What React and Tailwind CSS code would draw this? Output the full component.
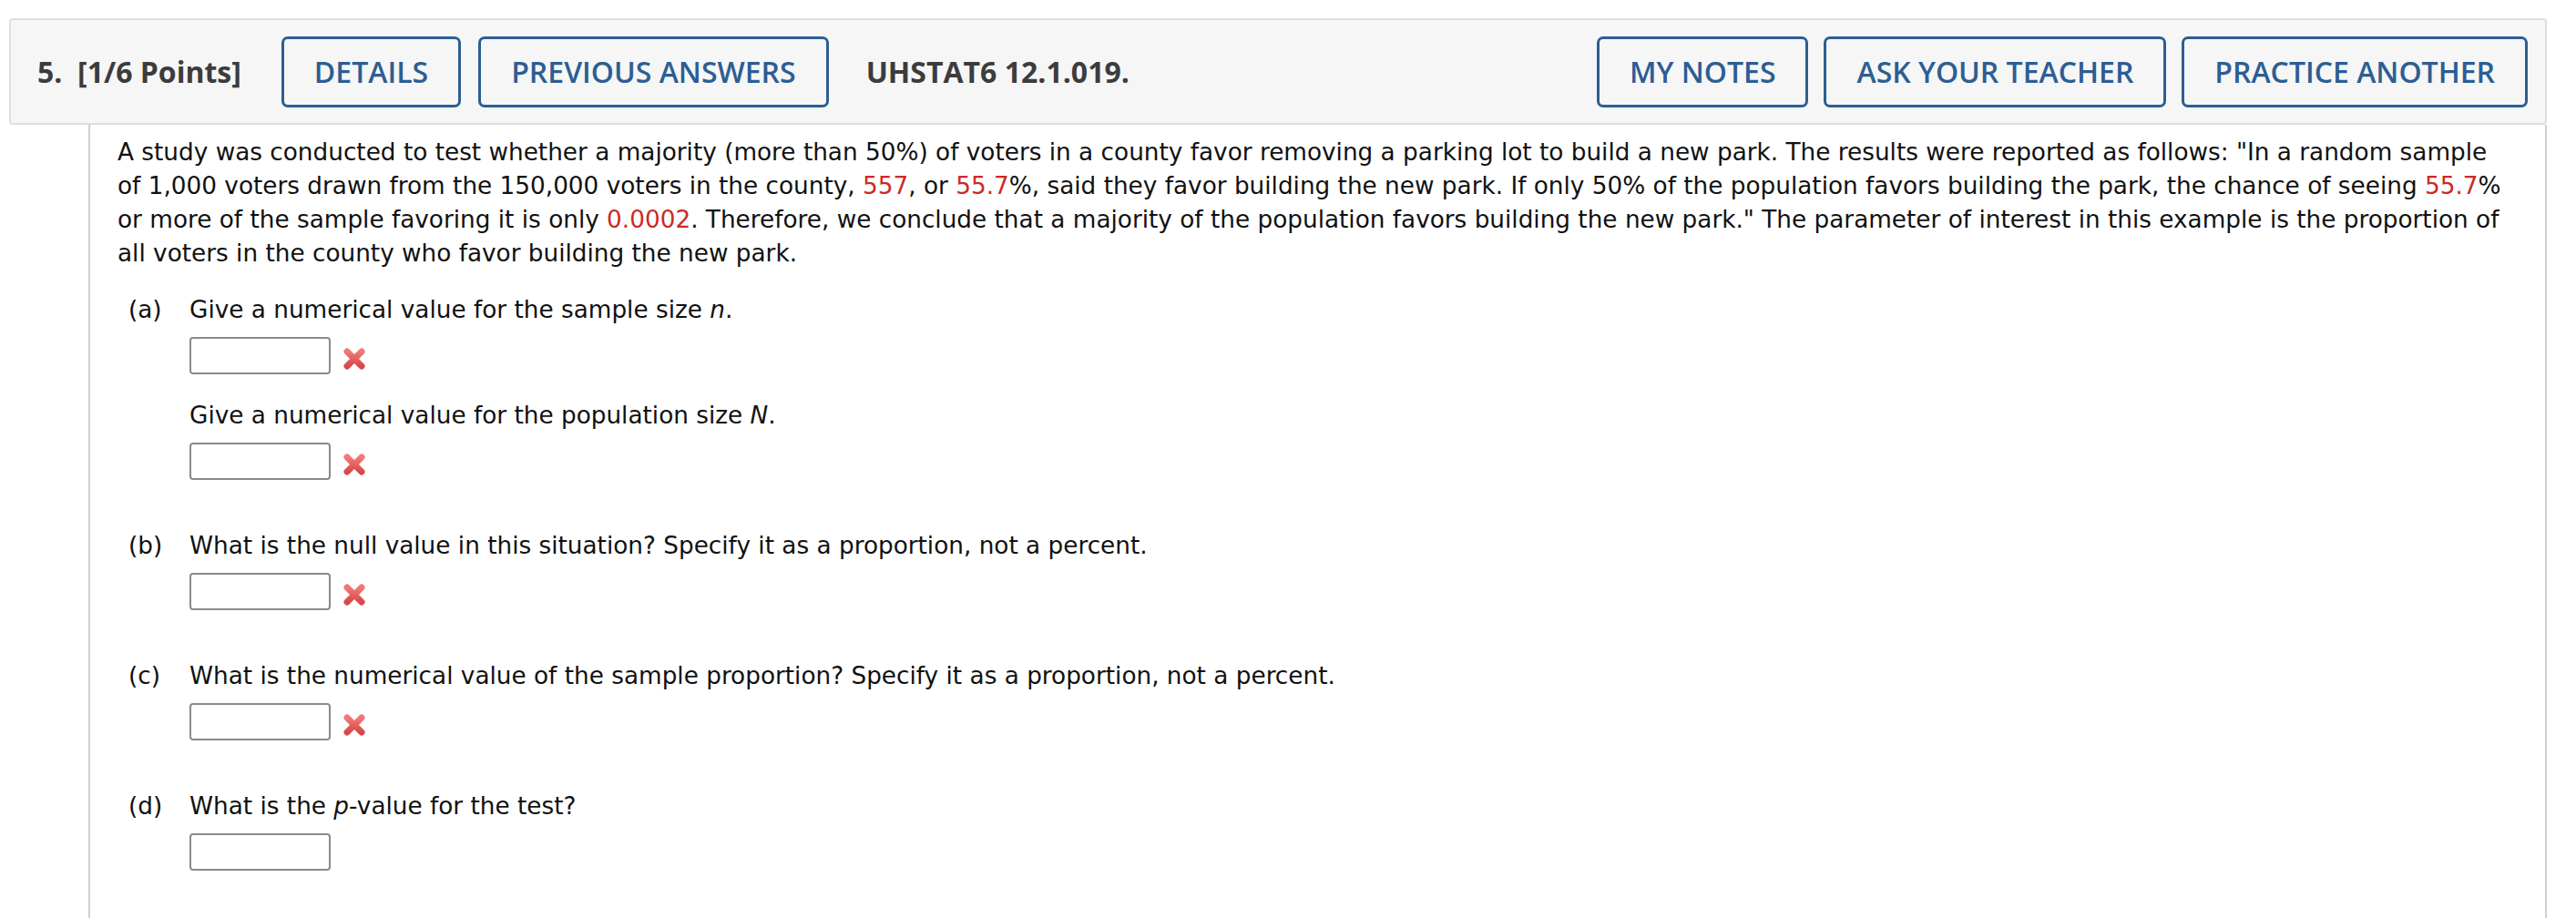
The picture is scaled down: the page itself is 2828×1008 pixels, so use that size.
const body = { fontFamily: 'Verdana, "DejaVu Sans", sans-serif' }
const head = { fontFamily: '"Open Sans", sans-serif' }

const Red = ({ children }) => <span className="text-[#cc2a24]">{children}</span>

const HeaderButton = ({ label }) => (
  <button className="h-[78px] px-[33px] border-[3px] border-[#2c5e93] rounded-[7px] text-[32px] font-semibold text-[#2c5e93] leading-none">
    {label}
  </button>
)

const WrongMark = () => (
  <svg width="26" height="24" viewBox="0 0 26 24" className="ml-[13px] mt-[12px]">
    <defs>
      <linearGradient id="xg" x1="0" y1="0" x2="0" y2="1">
        <stop offset="0" stopColor="#f07a7a" />
        <stop offset="1" stopColor="#d94848" />
      </linearGradient>
    </defs>
    <path d="M5 4 L21 20 M21 4 L5 20" stroke="url(#xg)" strokeWidth="7" strokeLinecap="round" />
  </svg>
)

const AnswerBox = ({ wrong = true }) => (
  <div className="flex items-start mt-[11px]">
    <div className="w-[155px] h-[41px] border-2 border-[#8a8a8a] rounded-[4px] bg-white" />
    {wrong && <WrongMark />}
  </div>
)

const Part = ({ letter, children }) => (
  <div className="flex">
    <span className="w-[79px] pl-[12px]">{letter}</span>
    <span>{children}</span>
  </div>
)

export default function App() {
  return (
    <div className="w-[2828px] h-[1008px] bg-white overflow-hidden pt-[20px]">
      <div
        style={head}
        className="ml-[10px] w-[2786px] h-[117px] flex items-center border-2 border-[#dedede] rounded-[4px] bg-[#f6f6f6] pl-[29px] pr-[19px]"
      >
        <span className="text-[32px] font-bold text-[#3c3c3c] whitespace-pre mr-[44px]">
          5.  [1/6 Points]
        </span>
        <div className="flex gap-[19px]">
          <HeaderButton label="DETAILS" />
          <HeaderButton label="PREVIOUS ANSWERS" />
        </div>
        <span className="ml-[41px] text-[32px] font-bold text-[#3c3c3c]">UHSTAT6 12.1.019.</span>
        <div className="ml-auto flex gap-[17px]">
          <HeaderButton label="MY NOTES" />
          <HeaderButton label="ASK YOUR TEACHER" />
          <HeaderButton label="PRACTICE ANOTHER" />
        </div>
      </div>

      <div
        style={body}
        className="ml-[97px] w-[2699px] h-[880px] border-l-2 border-r-2 border-[#cfcfcf] pl-[30px] pt-[12px] text-[26.3px] leading-[37px] text-[#111]"
      >
        <p className="whitespace-nowrap">
          A study was conducted to test whether a majority (more than 50%) of voters in a county favor removing a parking lot to build a new park. The results were reported as follows: "In a random sample
          <br />
          of 1,000 voters drawn from the 150,000 voters in the county, <Red>557</Red>, or <Red>55.7</Red>%, said they favor building the new park. If only 50% of the population favors building the park, the chance of seeing <Red>55.7</Red>%
          <br />
          or more of the sample favoring it is only <Red>0.0002</Red>. Therefore, we conclude that a majority of the population favors building the new park." The parameter of interest in this example is the proportion of
          <br />
          all voters in the county who favor building the new park.
        </p>

        <div className="mt-[25px]">
          <Part letter="(a)">
            Give a numerical value for the sample size <i>n</i>.
          </Part>
          <div className="pl-[79px]">
            <AnswerBox />
            <div className="mt-[27px]">
              Give a numerical value for the population size <i>N</i>.
            </div>
            <AnswerBox />
          </div>
        </div>

        <div className="mt-[54px]">
          <Part letter="(b)">What is the null value in this situation? Specify it as a proportion, not a percent.</Part>
          <div className="pl-[79px]">
            <AnswerBox />
          </div>
        </div>

        <div className="mt-[54px]">
          <Part letter="(c)">
            What is the numerical value of the sample proportion? Specify it as a proportion, not a percent.
          </Part>
          <div className="pl-[79px]">
            <AnswerBox />
          </div>
        </div>

        <div className="mt-[54px]">
          <Part letter="(d)">
            What is the <i>p</i>-value for the test?
          </Part>
          <div className="pl-[79px]">
            <AnswerBox wrong={false} />
          </div>
        </div>
      </div>
    </div>
  )
}
